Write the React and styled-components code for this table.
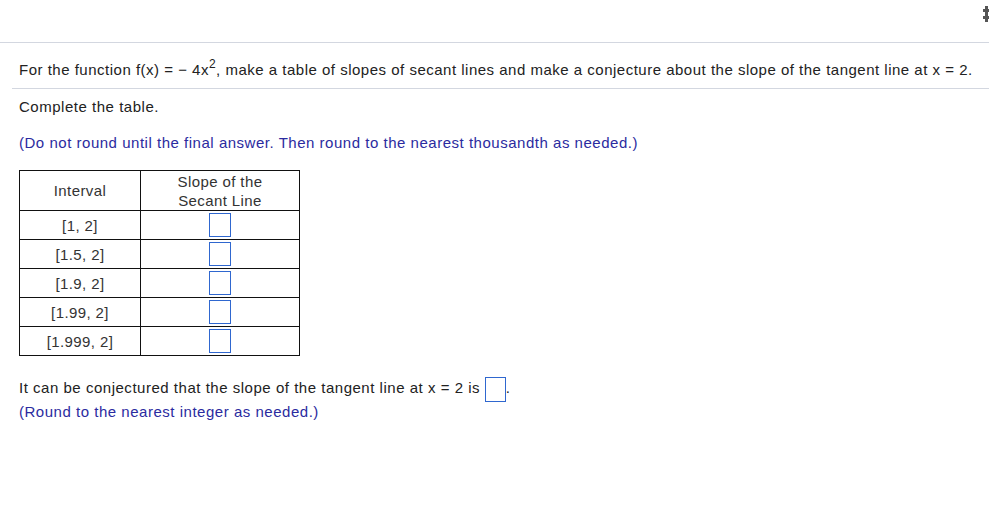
import styled, { createGlobalStyle } from 'styled-components';

const GlobalStyle = createGlobalStyle`
  html, body {
    margin: 0;
    padding: 0;
    background: #ffffff;
  }
  body {
    font-family: "Liberation Sans", Arial, sans-serif;
    font-size: 15px;
    color: #222222;
  }
`;

const Page = styled.div`
  width: 989px;
  height: 510px;
  overflow: hidden;
  background: #fff;
`;

const TopBar = styled.div`
  position: relative;
  height: 42px;
  border-bottom: 1px solid #d3d7e0;
`;

// partly cut off tool icon in the corner
const CornerIcon = styled.svg`
  position: absolute;
  top: 5px;
  left: 981px;
  color: #555;
`;

const Stem = styled.div`
  margin-left: 12px;
  padding: 17px 0 8px 7px;
  border-bottom: 1px solid #d3d7e0;
  line-height: 20px;
  letter-spacing: 0.5px;
`;

const Sup = styled.sup`
  font-size: 12px;
  line-height: 0;
  vertical-align: 7px;
`;

const Body = styled.div`
  padding-left: 19px;
  letter-spacing: 0.52px;
`;

const Line = styled.p`
  margin: ${p => p.$top || 0}px 0 0 0;
  line-height: 20px;
  color: ${p => (p.$hint ? '#2b2ba0' : '#222')};
`;

const Table = styled.table`
  margin-top: 17px;
  border-collapse: collapse;
  color: #333;
  letter-spacing: 0.4px;
`;

const Head = styled.th`
  border: 1px solid #111;
  font-weight: normal;
  width: ${p => p.$w}px;
  height: 39px;
  padding: 0;
  line-height: 19px;
  text-align: center;
`;

const Cell = styled.td`
  border: 1px solid #111;
  height: 28px;
  padding: 0;
  text-align: center;
`;

const AnswerBox = styled.span`
  display: inline-block;
  box-sizing: border-box;
  width: ${p => p.$w}px;
  height: ${p => p.$h}px;
  border: 1px solid #2f67cf;
  background: #fff;
  vertical-align: middle;
`;

const Conjecture = styled.p`
  margin: 20px 0 0 0;
  line-height: 24px;
`;

const intervals = ['[1, 2]', '[1.5, 2]', '[1.9, 2]', '[1.99, 2]', '[1.999, 2]'];

export default function App() {
  return (
    <Page>
      <GlobalStyle />
      <TopBar>
        <CornerIcon width="12" height="18" viewBox="0 0 12 18">
          <path
            fill="currentColor"
            d="M4 1h3v3h2v3H7v4h2v3H7v3H4v-3H2v-3h2V7H2V4h2z"
          />
        </CornerIcon>
      </TopBar>
      <Stem>
        For the function f(x) = − 4x<Sup>2</Sup>, make a table of slopes of secant lines and make a
        conjecture about the slope of the tangent line at x = 2.
      </Stem>
      <Body>
        <Line $top={8}>Complete the table.</Line>
        <Line $top={16} $hint>
          (Do not round until the final answer. Then round to the nearest thousandth as needed.)
        </Line>
        <Table>
          <thead>
            <tr>
              <Head $w={120}>Interval</Head>
              <Head $w={158}>
                Slope of the
                <br />
                Secant Line
              </Head>
            </tr>
          </thead>
          <tbody>
            {intervals.map(iv => (
              <tr key={iv}>
                <Cell>{iv}</Cell>
                <Cell>
                  <AnswerBox $w={22} $h={24} />
                </Cell>
              </tr>
            ))}
          </tbody>
        </Table>
        <Conjecture>
          It can be conjectured that the slope of the tangent line at x = 2 is{' '}
          <AnswerBox $w={21} $h={25} />.
        </Conjecture>
        <Line $hint>(Round to the nearest integer as needed.)</Line>
      </Body>
    </Page>
  );
}
